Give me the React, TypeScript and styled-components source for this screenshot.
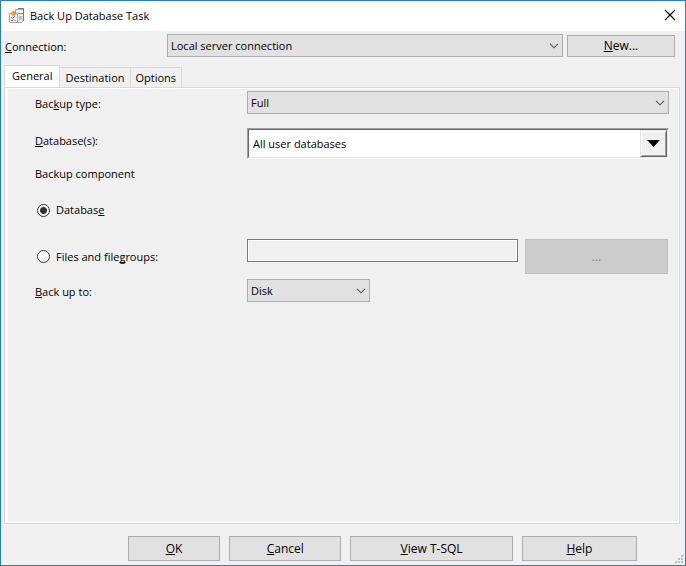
import React, { useState } from 'react';
import styled, { createGlobalStyle, css } from 'styled-components';

const GlobalStyle = createGlobalStyle`
  *, *::before, *::after { box-sizing: border-box; }
  body { margin: 0; background: #f0f0f0; }
  body, button, input, select {
    font-family: "Open Sans", "Noto Sans", sans-serif;
    font-size: 11px;
    line-height: 16px;
    color: #000;
  }
`;

const Dialog = styled.main`
  display: flex;
  flex-direction: column;
  min-height: 100vh;
  border: 1px solid #1883d7;
  background: #f0f0f0;
`;

const TitleBar = styled.header`
  display: flex;
  align-items: center;
  gap: 5px;
  height: 30px;
  padding: 0 7px 0 8px;
  background: #fff;
`;

const Title = styled.h1`
  flex: 1;
  margin: 0;
  font-size: 11px;
  font-weight: 400;
`;

const CloseButton = styled.button`
  display: flex;
  padding: 0 0 2px;
  border: 0;
  background: none;
`;

const ConnectionRow = styled.div`
  display: grid;
  grid-template-columns: 158px 1fr 108px;
  column-gap: 4px;
  align-items: end;
  padding: 3px 10px 0 4px;

  > label { line-height: 20px; }
`;

const Key = styled.span`
  text-decoration: underline;
  text-decoration-thickness: 1px;
  text-underline-offset: 1px;
  text-decoration-skip-ink: none;
`;

const Button = styled.button<{ $size?: 'small' | 'large' }>`
  height: ${p => (p.$size === 'large' ? 35 : p.$size === 'small' ? 22 : 25)}px;
  padding: 0 8px;
  border: 1px solid #adadad;
  border-radius: 0;
  background: #e1e1e1;
  font-size: 12px;

  &:disabled {
    border-color: #bfbfbf;
    background: #ccc;
    color: #838383;
  }
`;

const Tabs = styled.div`
  display: flex;
  align-items: flex-end;
  margin: 8px 5px 0 3px;
`;

const Tab = styled.button`
  height: 20px;
  padding: 1px 5px 0;
  border: 1px solid #d9d9d9;
  border-bottom: 0;
  border-radius: 0;
  background: #f0f0f0;

  & + & { border-left: 0; }

  &[aria-selected='true'] {
    height: 23px;
    margin-bottom: -1px;
    padding: 0 7px 2px;
    background: #fff;
  }
`;

const Panel = styled.section`
  flex: 1;
  margin: 0 5px 0 3px;
  border: 1px solid #d9d9d9;
  background: #f0f0f0;
  box-shadow: inset 3px 0 #fff, inset -1px 0 #fff, inset 0 1px #fff, inset 0 -2px #fff;
`;

const Form = styled.form`
  display: grid;
  grid-template-columns: 212px 1fr;
  grid-template-rows: 37px 33px 36px 42px 40px auto;
  align-items: start;
  padding: 3px 10px 0 30px;
`;

const labelText = css`
  line-height: 26px;
  white-space: nowrap;
`;

const Label = styled.label`${labelText}`;

const Wide = styled.div`
  ${labelText}
  grid-column: 1 / -1;
`;

const RadioLabel = styled.label<{ $tall?: boolean }>`
  display: flex;
  align-items: center;
  gap: 6px;
  height: ${p => (p.$tall ? 35 : 26)}px;
  padding-left: 2px;
  white-space: nowrap;
`;

const Radio = styled.input`
  appearance: none;
  width: 13px;
  height: 13px;
  margin: 0;
  border: 1px solid #333;
  border-radius: 50%;
  background: #fff;

  &:checked { background: radial-gradient(circle, #333 3px, #fff 4px); }
`;

const Stack = styled.div<{ $narrow?: boolean }>`
  display: grid;
  grid-template-columns: 1fr;
  align-items: center;
  width: ${p => (p.$narrow ? '123px' : 'auto')};

  > * { grid-area: 1 / 1; }
  > svg { justify-self: end; margin-right: 4px; pointer-events: none; }
`;

const Select = styled.select`
  appearance: none;
  width: 100%;
  height: 23px;
  padding: 0 20px 0 3px;
  border: 1px solid #adadad;
  border-radius: 0;
  background: #e1e1e1;
`;

const Sunken = styled.div`
  border: 1px solid;
  border-color: #a0a0a0 #fff #fff #a0a0a0;
`;

const SunkenSelect = styled.select`
  appearance: none;
  width: 100%;
  height: 29px;
  padding: 0 30px 0 4px;
  border: 1px solid;
  border-color: #696969 #e3e3e3 #e3e3e3 #696969;
  border-radius: 0;
  background: #fff;
`;

const DropButton = styled.span`
  display: flex;
  align-items: center;
  justify-content: center;
  justify-self: end;
  width: 27px;
  height: 27px;
  margin-right: 1px;
  border: 1px solid;
  border-color: #e3e3e3 #696969 #696969 #e3e3e3;
  background: #f0f0f0;
  box-shadow: inset 1px 1px #fff, inset -1px -1px #a0a0a0;
  pointer-events: none;
`;

const FileRow = styled.div`
  display: grid;
  grid-template-columns: 271fr 143fr;
  column-gap: 7px;
  align-items: start;
  margin-right: 1px;
`;

const TextBox = styled.input`
  width: 100%;
  height: 23px;
  padding: 0 4px;
  border: 1px solid #7a7a7a;
  border-radius: 0;
  background: #f0f0f0;
  box-shadow: inset 0 0 0 1px #fff;
`;

const Footer = styled.footer`
  display: grid;
  grid-template-columns: 92fr 112fr 162fr 115fr 38px;
  column-gap: 9px;
  align-items: end;
  padding: 12px 1px 1px 127px;

  > button { margin-bottom: 3px; }
  > svg { justify-self: end; }
`;

const Chevron = () => (
  <svg width="10" height="6" viewBox="0 0 10 6" fill="none" aria-hidden="true">
    <path d="M1 .8 5 4.8 9 .8" stroke="#555" strokeWidth="1.1" />
  </svg>
);

const TaskIcon = () => (
  <svg width="16" height="16" viewBox="0 0 16 16" aria-hidden="true">
    <path d="M6.500 1.500h8v11l-2 2h-6z" fill="#e8ecef" stroke="#a3a9ad" />
    <path d="M9 .5h5.500v12.500" fill="none" stroke="#72797e" />
    <path d="M9 2h5v3H9z" fill="#f8fafb" />
    <path d="M9 5.500h5" stroke="#8b9297" />
    <path d="M10 8h3v4h-3z" fill="#a6c9d4" />
    <path d="M.5 5.500h8v9h-8z" fill="#fff" stroke="#a4a4a4" />
    <path d="m2 9 1.500 1.500L6 8M2 12l1 1 1.500-1.500" fill="none" stroke="#c54b38" />
    <path d="M5.500 12.500H7" stroke="#777" />
    <circle cx="4.500" cy="5.500" r="2" fill="#eda72e" stroke="#ad711b" strokeWidth=".5" />
  </svg>
);

const tabNames = ['General', 'Destination', 'Options'];

export default function App() {
  const [tab, setTab] = useState('General');
  const [scope, setScope] = useState('database');

  return (
    <>
      <GlobalStyle />
      <Dialog aria-labelledby="title">
        <TitleBar>
          <TaskIcon />
          <Title id="title">Back Up Database Task</Title>
          <CloseButton type="button" aria-label="Close">
            <svg width="16" height="12" viewBox="0 0 16 12" fill="none" aria-hidden="true">
              <path d="m3 1 10 10M13 1 3 11" stroke="#000" strokeWidth="1.1" />
            </svg>
          </CloseButton>
        </TitleBar>

        <ConnectionRow>
          <label htmlFor="connection"><Key>C</Key>onnection:</label>
          <Stack>
            <Select id="connection"><option>Local server connection</option></Select>
            <Chevron />
          </Stack>
          <Button type="button" $size="small"><Key>N</Key>ew...</Button>
        </ConnectionRow>

        <Tabs role="tablist">
          {tabNames.map(name => (
            <Tab key={name} type="button" role="tab" aria-selected={tab === name} onClick={() => setTab(name)}>
              {name}
            </Tab>
          ))}
        </Tabs>

        <Panel role="tabpanel" aria-label={tab}>
          <Form>
            <Label htmlFor="type">Bac<Key>k</Key>up type:</Label>
            <Stack>
              <Select id="type"><option>Full</option></Select>
              <Chevron />
            </Stack>

            <Label htmlFor="databases"><Key>D</Key>atabase(s):</Label>
            <Sunken>
              <Stack>
                <SunkenSelect id="databases"><option>All user databases</option></SunkenSelect>
                <DropButton>
                  <svg width="13" height="7" viewBox="0 0 13 7" aria-hidden="true">
                    <path d="M0 0h13L6.500 7z" fill="#000" />
                  </svg>
                </DropButton>
              </Stack>
            </Sunken>

            <Wide>Backup component</Wide>

            <RadioLabel>
              <Radio type="radio" name="scope" checked={scope === 'database'} onChange={() => setScope('database')} />
              <span>Databas<Key>e</Key></span>
            </RadioLabel>
            <span />

            <RadioLabel $tall>
              <Radio type="radio" name="scope" checked={scope === 'files'} onChange={() => setScope('files')} />
              <span>Files and file<Key>g</Key>roups:</span>
            </RadioLabel>
            <FileRow>
              <TextBox type="text" aria-label="Files and filegroups" readOnly />
              <Button type="button" $size="large" disabled={scope !== 'files'}>...</Button>
            </FileRow>

            <Label htmlFor="target"><Key>B</Key>ack up to:</Label>
            <Stack $narrow>
              <Select id="target"><option>Disk</option></Select>
              <Chevron />
            </Stack>
          </Form>
        </Panel>

        <Footer>
          <Button type="button"><Key>O</Key>K</Button>
          <Button type="button"><Key>C</Key>ancel</Button>
          <Button type="button"><Key>V</Key>iew T-SQL</Button>
          <Button type="button"><Key>H</Key>elp</Button>
          <svg width="9" height="9" viewBox="0 0 9 9" fill="#bfbfbf" aria-hidden="true">
            <path d="M6 0h2v2H6zM3 3h2v2H3zM6 3h2v2H6zM0 6h2v2H0zM3 6h2v2H3zM6 6h2v2H6z" />
          </svg>
        </Footer>
      </Dialog>
    </>
  );
}
